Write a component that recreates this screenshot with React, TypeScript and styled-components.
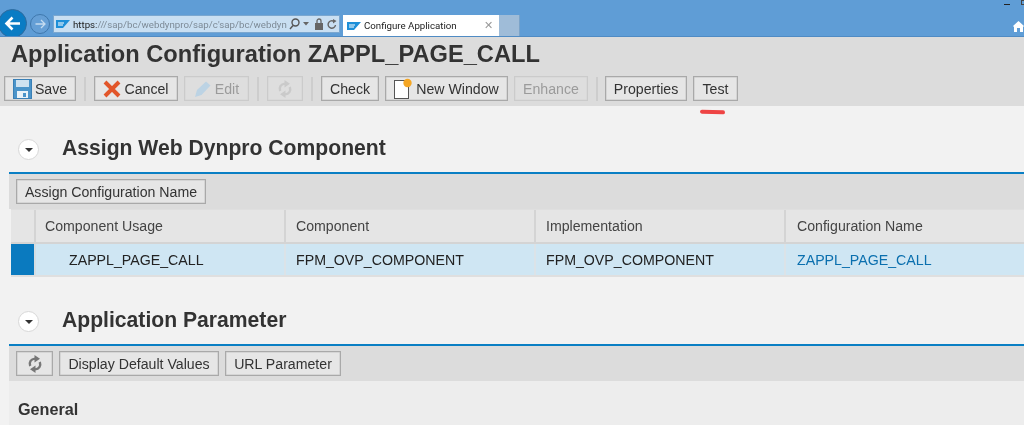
import React from "react";
import styled, { createGlobalStyle } from "styled-components";

const Global = createGlobalStyle`
  html, body { margin: 0; padding: 0; background: #f2f2f2; }
  body { width: 1024px; height: 425px; overflow: hidden; font-family: "Liberation Sans", Arial, sans-serif; }
  * { box-sizing: border-box; }
  svg { flex: none; }
`;

const Page = styled.div`
  width: 1024px;
  height: 425px;
  overflow: hidden;
  display: flex;
  flex-direction: column;
  filter: blur(0.45px);
`;

const Chrome = styled.div`
  height: 37px;
  flex: none;
  background: #5f9dd6;
  border-bottom: 1px solid #4f8bc4;
  display: flex;
  align-items: flex-end;
  overflow: hidden;
`;
const BackButton = styled.div`
  width: 29px;
  height: 29px;
  margin: 0 0 -2px -2px;
  border-radius: 50%;
  background: #0a7cc4;
  border: 1px solid #2f6b9e;
  display: flex;
  align-items: center;
  justify-content: center;
  flex: none;
`;
const ForwardButton = styled.div`
  width: 20px;
  height: 20px;
  margin: 0 3px 2px 3px;
  border-radius: 50%;
  border: 1px solid #3f78ad;
  background: #659fd6;
  display: flex;
  align-items: center;
  justify-content: center;
  flex: none;
`;
const AddressBar = styled.div`
  width: 287px;
  height: 18px;
  margin-bottom: 3px;
  flex: none;
  background: #c9dff2;
  border: 1px solid #7aa7d0;
  display: flex;
  align-items: center;
  padding: 0 3px 0 2px;
  font: 9.7px Roboto, sans-serif;
  color: #7d8a96;
  white-space: nowrap;
  overflow: hidden;
`;
const Strong = styled.span`
  color: #222;
`;
const UrlPart = styled.span<{ $w: number; $gap?: number }>`
  display: inline-block;
  width: ${(p) => p.$w}px;
  margin-left: ${(p) => p.$gap ?? 0}px;
  flex: none;
`;
const AddressIcons = styled.div`
  display: flex;
  align-items: center;
  gap: 3px;
  margin-left: 5px;
  color: #555;
`;
const Tab = styled.div`
  width: 156px;
  height: 21px;
  margin: 0 0 0 3px;
  flex: none;
  background: #fff;
  display: flex;
  align-items: center;
  padding: 0 6px 0 4px;
  font: 9.7px Roboto, sans-serif;
  color: #222;
  gap: 3px;
`;
const TabClose = styled.span`
  margin-left: auto;
  color: #999;
  font-size: 11px;
  line-height: 1;
`;
const NewTab = styled.div`
  width: 21px;
  height: 21px;
  flex: none;
  background: #9fbcd8;
  border-right: 1px solid #7aa3c9;
`;
const WindowControls = styled.div`
  margin-left: auto;
  width: 22px;
  height: 36px;
  position: relative;
  flex: none;
`;
const Minimize = styled.div`
  position: absolute;
  left: 2px;
  top: 4px;
  width: 6px;
  height: 1px;
  background: #222;
`;
const Maximize = styled.div`
  position: absolute;
  left: 19px;
  top: 0;
  width: 5px;
  height: 5px;
  border: 1px solid #444;
`;
const Home = styled.div`
  position: absolute;
  left: 11px;
  top: 18px;
`;

const Header = styled.div`
  height: 69px;
  flex: none;
  background: #dcdcdc;
  padding: 4px 0 0 4px;
`;
const PageTitle = styled.h1`
  margin: 0 0 0 7px;
  height: 35px;
  font: bold 23.65px/26px "Liberation Sans", Arial, sans-serif;
  color: #333;
  white-space: nowrap;
`;
const Toolbar = styled.div`
  display: flex;
  align-items: center;
  gap: 6px;
`;
const Separator = styled.div`
  width: 2px;
  height: 24px;
  background: #cdcdcd;
  margin: 0 2px 0 2px;
`;
const Wide = styled(Separator)`
  margin: 0 1px 0 2px;
`;
const Button = styled.button<{ $w: number; $off?: boolean }>`
  width: ${(p) => p.$w}px;
  height: 25px;
  flex: none;
  border: 1px solid ${(p) => (p.$off ? "#cbcbcb" : "#a9a9a9")};
  box-shadow: inset 0 0 0 0.5px ${(p) => (p.$off ? "#d4d4d4" : "#c4c4c4")};
  background: ${(p) => (p.$off ? "#dedede" : "#e6e6e6")};
  color: ${(p) => (p.$off ? "#9b9b9b" : "#333")};
  font: 14.15px "Liberation Sans", Arial, sans-serif;
  display: flex;
  align-items: center;
  justify-content: center;
  gap: 3px;
  padding: 0;
  white-space: nowrap;
`;
const Mark = styled.div`
  height: 4px;
  width: 25px;
  margin: 4px 0 0 700px;
  background: #ee4444;
  border-radius: 2px;
  transform: rotate(2deg);
`;

const Body = styled.div`
  flex: 1;
  background: #f2f2f2;
`;
const SectionHead = styled.div<{ $top: number }>`
  display: flex;
  align-items: center;
  height: 30px;
  margin: ${(p) => p.$top}px 0 0 18px;
  gap: 23px;
`;
const Toggle = styled.div`
  width: 21px;
  height: 21px;
  border-radius: 50%;
  background: #fff;
  border: 1px solid #d8d8d8;
  display: flex;
  align-items: center;
  justify-content: center;
  flex: none;
`;
const Caret = styled.div`
  width: 0;
  height: 0;
  border-left: 4px solid transparent;
  border-right: 4px solid transparent;
  border-top: 4px solid #333;
  margin-top: 2px;
`;
const SectionTitle = styled.h2`
  margin: 0;
  padding-bottom: 2px;
  font: bold 21.15px "Liberation Sans", Arial, sans-serif;
  color: #333;
  white-space: nowrap;
`;
const SectionBar = styled.div`
  margin: 8px 0 0 9px;
  height: 37px;
  background: #dcdcdc;
  border-top: 2px solid #0a7fc4;
  padding: 5px 0 0 7px;
  display: flex;
  gap: 6px;
`;
const Table = styled.div`
  margin: 0 0 0 11px;
  background: #dfdfdf;
  padding: 1px 0 2px;
`;
const Row = styled.div<{ $h: number }>`
  display: grid;
  grid-template-columns: 25px 250px 250px 250px 1fr;
  height: ${(p) => p.$h}px;
  & > :nth-child(2) {
    padding-left: 9px;
  }
  & > :last-child {
    border-right: none;
    padding-left: 11px;
  }
`;
const HeadCell = styled.div`
  background: #e5e5e5;
  border-right: 2px solid #d4d4d4;
  border-bottom: 2px solid #d4d4d4;
  display: flex;
  align-items: center;
  padding-left: 10px;
  font: 14.15px "Liberation Sans", Arial, sans-serif;
  color: #444;
  white-space: nowrap;
`;
const DataCell = styled.div<{ $link?: boolean }>`
  background: #cfe6f3;
  border-right: 2px solid #dbe3e8;
  display: flex;
  align-items: center;
  padding-left: 10px;
  font: 14.2px "Liberation Sans", Arial, sans-serif;
  color: ${(p) => (p.$link ? "#0a6fae" : "#222")};
  white-space: nowrap;
`;
const IndentCell = styled(DataCell)`
  && {
    padding-left: 33px;
  }
`;
const Selector = styled.div`
  background: #0a7abf;
  border-right: 2px solid #d4dde2;
`;
const Panel = styled.div`
  margin-left: 9px;
  background: #ededed;
  height: 46px;
  padding: 19px 0 0 9px;
  font: bold 16.2px "Liberation Sans", Arial, sans-serif;
  color: #333;
`;

const SapLogo = () => (
  <svg width="14" height="8" viewBox="0 0 14 8">
    <polygon points="0,0 14,0 7,8 0,8" fill="#1d8fd8" />
    <rect x="2" y="2.5" width="6" height="1" fill="#fff" />
    <rect x="2" y="4.5" width="5" height="1" fill="#fff" />
  </svg>
);

const Refresh = ({ color }: { color: string }) => (
  <svg width="16" height="18" viewBox="0 0 16 18" fill="none" stroke={color} strokeWidth="2.4">
    <path d="M3.2 11 C1.8 7 4 4 8 3.6" />
    <path d="M12.8 7 C14.2 11 12 14 8 14.4" />
    <polygon points="7.5,0 13,3.8 7.5,7.5" fill={color} stroke="none" />
    <polygon points="8.5,18 3,14.2 8.5,10.5" fill={color} stroke="none" />
  </svg>
);

const SaveIcon = () => (
  <svg width="19" height="20" viewBox="0 0 19 20">
    <rect x="0.5" y="0.5" width="18" height="19" fill="#4b94c9" stroke="#3a7fb5" />
    <rect x="3" y="1" width="13" height="7" fill="#cfe2f0" />
    <rect x="4" y="12" width="11" height="7" fill="#e9f2f8" />
    <rect x="10" y="14" width="3" height="4" fill="#4b94c9" />
  </svg>
);

const CancelIcon = () => (
  <svg width="18" height="18" viewBox="0 0 18 18">
    <path d="M2 2 L16 16 M16 2 L2 16" stroke="#e2562a" strokeWidth="4" />
  </svg>
);

const EditIcon = () => (
  <svg width="18" height="18" viewBox="0 0 18 18">
    <path d="M1 17 L3 10 L12 1.5 L16.5 5.5 L7.5 15 Z" fill="#bcd3e4" />
  </svg>
);

const NewWindowIcon = () => (
  <svg width="19" height="21" viewBox="0 0 19 21">
    <rect x="0.5" y="2.5" width="14" height="18" fill="#fff" stroke="#555" />
    <circle cx="13.5" cy="5" r="4.2" fill="#f5a623" />
  </svg>
);

export default function App() {
  return (
    <Page>
      <Global />
      <Chrome>
        <BackButton>
          <svg width="17" height="15" viewBox="0 0 17 15" fill="none" stroke="#fff" strokeWidth="2.6">
            <path d="M16 7.5 H3 M8.5 1.5 L2.5 7.5 L8.5 13.5" />
          </svg>
        </BackButton>
        <ForwardButton>
          <svg width="11" height="10" viewBox="0 0 11 10" fill="none" stroke="#c5dcf0" strokeWidth="1.3">
            <path d="M0.5 5 H9.5 M6 1 L10 5 L6 9" />
          </svg>
        </ForwardButton>
        <AddressBar>
          <SapLogo />
          <UrlPart $w={145} $gap={3}>
            <Strong>https:</Strong>///sap/bc/webdynpro/sap/c
          </UrlPart>
          <UrlPart $w={66}>'sap/bc/webdyn</UrlPart>
          <AddressIcons>
            <svg width="11" height="12" viewBox="0 0 11 12" fill="none" stroke="#555" strokeWidth="1.4">
              <circle cx="6.5" cy="4.5" r="3.5" />
              <path d="M4 7.5 L1 11" />
            </svg>
            <svg width="6" height="4" viewBox="0 0 6 4">
              <polygon points="0,0 6,0 3,3.5" fill="#666" />
            </svg>
            <svg width="10" height="12" viewBox="0 0 10 12" style={{ marginLeft: 2 }}>
              <rect x="1" y="5" width="8" height="7" fill="#666" />
              <path d="M3 5 V3 A2 2 0 0 1 7 3 V5" fill="none" stroke="#666" strokeWidth="1.3" />
            </svg>
            <svg width="10" height="11" viewBox="0 0 10 11" fill="none" stroke="#666" strokeWidth="1.4">
              <path d="M8.5 6 A3.7 3.7 0 1 1 7 2.5" />
              <polygon points="6,0 9.5,2 6,4.5" fill="#666" stroke="none" />
            </svg>
          </AddressIcons>
        </AddressBar>
        <Tab>
          <SapLogo />
          Configure Application
          <TabClose>✕</TabClose>
        </Tab>
        <NewTab />
        <WindowControls>
          <Minimize />
          <Maximize />
          <Home>
            <svg width="11" height="11" viewBox="0 0 11 11">
              <path d="M5.5 0 L11 5 L10 6 V11 H7 V7 H4 V11 H1 V6 L0 5 Z" fill="#fff" />
            </svg>
          </Home>
        </WindowControls>
      </Chrome>
      <Header>
        <PageTitle>Application Configuration ZAPPL_PAGE_CALL</PageTitle>
        <Toolbar>
          <Button $w={72}><SaveIcon />Save</Button>
          <Separator />
          <Button $w={84}><CancelIcon />Cancel</Button>
          <Button $w={65} $off><EditIcon />Edit</Button>
          <Separator />
          <Button $w={36} $off><Refresh color="#cacaca" /></Button>
          <Separator />
          <Button $w={58}>Check</Button>
          <Button $w={123}><NewWindowIcon />New Window</Button>
          <Button $w={74} $off>Enhance</Button>
          <Wide />
          <Button $w={82}>Properties</Button>
          <Button $w={45}>Test</Button>
        </Toolbar>
      </Header>
      <Body>
        <Mark />
        <SectionHead $top={20}>
          <Toggle><Caret /></Toggle>
          <SectionTitle>Assign Web Dynpro Component</SectionTitle>
        </SectionHead>
        <SectionBar>
          <Button $w={190}>Assign Configuration Name</Button>
        </SectionBar>
        <Table>
          <Row $h={34}>
            <HeadCell />
            <HeadCell>Component Usage</HeadCell>
            <HeadCell>Component</HeadCell>
            <HeadCell>Implementation</HeadCell>
            <HeadCell>Configuration Name</HeadCell>
          </Row>
          <Row $h={31}>
            <Selector />
            <IndentCell>ZAPPL_PAGE_CALL</IndentCell>
            <DataCell>FPM_OVP_COMPONENT</DataCell>
            <DataCell>FPM_OVP_COMPONENT</DataCell>
            <DataCell $link>ZAPPL_PAGE_CALL</DataCell>
          </Row>
        </Table>
        <SectionHead $top={29}>
          <Toggle><Caret /></Toggle>
          <SectionTitle>Application Parameter</SectionTitle>
        </SectionHead>
        <SectionBar>
          <Button $w={37}><Refresh color="#777" /></Button>
          <Button $w={160}>Display Default Values</Button>
          <Button $w={116}>URL Parameter</Button>
        </SectionBar>
        <Panel>General</Panel>
      </Body>
    </Page>
  );
}
